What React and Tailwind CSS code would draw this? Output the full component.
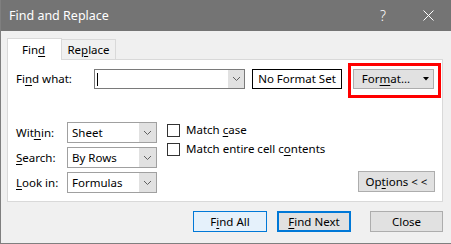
import React from 'react';

const font = { fontFamily: '"Noto Sans", "Open Sans", sans-serif' };

// underline the access-key letter
const Key = ({ children }) => <span className="underline underline-offset-2">{children}</span>;

const Chevron = () => (
  <svg width="9" height="6" viewBox="0 0 9 6" className="text-[#606060]">
    <polyline points="1,1 4.5,4.5 8,1" fill="none" stroke="currentColor" strokeWidth="1" />
  </svg>
);

const Select = ({ value }) => (
  <div className="flex h-[21px] w-[90px] border border-[#a0a0a0] bg-white">
    <div className="flex-1 pl-[4px] leading-[19px]">{value}</div>
    <div className="flex w-[17px] items-center justify-center bg-[#e1e1e1]">
      <Chevron />
    </div>
  </div>
);

const Checkbox = ({ children }) => (
  <label className="flex items-center gap-[6px]">
    <span className="h-[13px] w-[13px] border border-[#333333] bg-white" />
    <span>{children}</span>
  </label>
);

const Button = ({ className, children }) => (
  <button className={`flex items-center justify-center text-[11.5px] text-black ${className}`}>{children}</button>
);

export default function App() {
  return (
    <div className="flex h-[244px] w-[451px] flex-col border-b border-l border-[#7f7f7f] bg-[#f0f0f0] text-[11.5px] leading-[16px] text-black" style={font}>
      {/* title bar */}
      <div className="flex h-[31px] shrink-0 items-center bg-[#747474] pl-[8px] text-white">
        <span className="text-[12.5px]">Find and Replace</span>
        <span className="ml-auto mr-[37px] text-[14px] font-light">?</span>
        <svg width="11" height="11" viewBox="0 0 11 11" className="mr-[17px]">
          <path d="M0.5 0.5 L10.5 10.5 M10.5 0.5 L0.5 10.5" stroke="white" strokeWidth="1" />
        </svg>
      </div>

      {/* tabs */}
      <div className="ml-[6px] mt-[7px] flex items-end">
        <div className="relative z-10 -mb-px flex h-[22px] w-[55px] items-center border border-b-0 border-[#d9d9d9] bg-white pl-[14px]">
          Fin<Key>d</Key>
        </div>
        <div className="flex h-[20px] w-[54px] items-center justify-center border border-b-0 border-l-0 border-[#d9d9d9] bg-[#f0f0f0]">
          Re<Key>p</Key>lace
        </div>
      </div>

      {/* panel */}
      <div className="relative ml-[6px] flex h-[143px] w-[436px] flex-col border border-[#d9d9d9] bg-white pl-[8px]">
        <div className="mt-[9px] flex items-center">
          <div className="w-[78px]">Fi<Key>n</Key>d what:</div>
          <div className="flex h-[20px] w-[151px] border border-[#7a7a7a] bg-white">
            <div className="flex flex-1 items-center pl-[2px]">
              <span className="h-[13px] w-px bg-black" />
            </div>
            <div className="flex w-[16px] items-center justify-center bg-[#e1e1e1]">
              <Chevron />
            </div>
          </div>
          <div className="ml-[7px] flex h-[20px] w-[90px] items-center justify-center border border-black bg-white">
            No Format Set
          </div>
          <div className="relative ml-[11px]">
            <Button className="h-[20px] w-[81px] border border-[#adadad] bg-[#e1e1e1] pl-[4px]">
              For<Key>m</Key>at...
              <svg width="6" height="4" viewBox="0 0 6 4" className="ml-[13px]">
                <polygon points="0,0 6,0 3,3.5" fill="black" />
              </svg>
            </Button>
            <div className="pointer-events-none absolute -left-[5px] -right-[7px] -top-[6px] -bottom-[9px] border-[3px] border-[#ff0000]" />
          </div>
        </div>

        <div className="mt-[33px] flex">
          <div className="flex flex-col gap-[4px]">
            <div className="flex items-center">
              <div className="w-[51px]">Wit<Key>h</Key>in:</div>
              <Select value="Sheet" />
            </div>
            <div className="flex items-center">
              <div className="w-[51px]"><Key>S</Key>earch:</div>
              <Select value="By Rows" />
            </div>
            <div className="flex items-center">
              <div className="w-[51px]"><Key>L</Key>ook in:</div>
              <Select value="Formulas" />
            </div>
          </div>
          <div className="ml-[10px] flex flex-1 flex-col">
            <div className="flex flex-col gap-[3px]">
              <Checkbox>Match <Key>c</Key>ase</Checkbox>
              <Checkbox>Match entire cell c<Key>o</Key>ntents</Checkbox>
            </div>
            <div className="mr-[7px] mt-[14px] flex justify-end">
              <Button className="h-[21px] w-[77px] border border-[#adadad] bg-[#e1e1e1]">
                Op<Key>t</Key>ions &lt; &lt;
              </Button>
            </div>
          </div>
        </div>
      </div>

      {/* bottom buttons */}
      <div className="mt-[9px] flex">
        <Button className="ml-[192px] h-[21px] w-[74px] border border-[#0078d7] bg-[#e5f1fb]">
          F<Key>i</Key>nd All
        </Button>
        <Button className="ml-[10px] h-[21px] w-[74px] border-2 border-[#0078d7] bg-[#e1e1e1]">
          <Key>F</Key>ind Next
        </Button>
        <Button className="ml-[19px] h-[21px] w-[73px] border border-[#adadad] bg-[#e1e1e1]">
          Close
        </Button>
      </div>
    </div>
  );
}
